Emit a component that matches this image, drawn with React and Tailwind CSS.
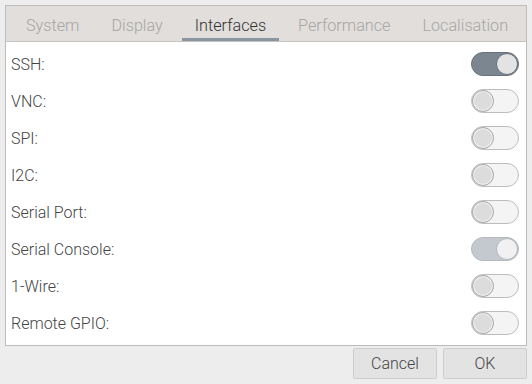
const TABS = ['System', 'Display', 'Interfaces', 'Performance', 'Localisation'];

const ROWS = [
  { label: 'SSH:', on: true },
  { label: 'VNC:', on: false },
  { label: 'SPI:', on: false },
  { label: 'I2C:', on: false },
  { label: 'Serial Port:', on: false },
  { label: 'Serial Console:', on: true, disabled: true },
  { label: '1-Wire:', on: false },
  { label: 'Remote GPIO:', on: false },
];

function Switch({ on, disabled }) {
  if (on) {
    const track = disabled ? 'bg-[#c3c9cf] border-[#b4bac0]' : 'bg-[#7b8690] border-[#6a737b]';
    const knob = disabled ? 'bg-[#f1f1f1] border-[#b4bac0]' : 'bg-[#e3e3e3] border-[#6a737b]';
    return (
      <div className={`w-[48px] h-[24px] rounded-full border flex items-center justify-end ${track}`}>
        <div className={`w-[22px] h-[22px] rounded-full border ${knob}`} />
      </div>
    );
  }
  return (
    <div className="w-[48px] h-[24px] rounded-full border border-[#bdbdbd] bg-[#f4f4f4] flex items-center justify-start">
      <div className="w-[22px] h-[22px] rounded-full border border-[#a9a9a9] bg-[#dcdcdc] shadow-[inset_0_0_0_1px_#f4f4f4]" />
    </div>
  );
}

export default function App() {
  return (
    <div
      className="w-[532px] h-[384px] bg-[#ededed] pt-[5px] px-[5px] flex flex-col text-[16px] font-light"
      style={{ fontFamily: 'Roboto, "Liberation Sans", sans-serif' }}
    >
      {/* Notebook */}
      <div className="w-[522px] h-[341px] border border-[#bcbcbc] flex flex-col">
        <div className="h-[36px] bg-[#e1dedb] flex pl-[7px] gap-[6px] border-b border-[#c7c4c1]">
          {TABS.map((t) => (
            <div
              key={t}
              className={`px-[13px] flex items-center border-b-[3px] text-[16.2px] ${
                t === 'Interfaces'
                  ? 'border-[#8b959e] text-[#333333]'
                  : 'border-transparent text-[#a6a6a6]'
              }`}
            >
              <span className="pt-[8px]">{t}</span>
            </div>
          ))}
        </div>
        <div className="flex-1 bg-white flex flex-col justify-between pt-[10px] pb-[10px] pl-[5px] pr-[7px]">
          {ROWS.map((r) => (
            <div key={r.label} className="h-[24px] flex items-center justify-between">
              <span className="text-[#444444] pt-[1px]">{r.label}</span>
              <Switch on={r.on} disabled={r.disabled} />
            </div>
          ))}
        </div>
      </div>

      {/* Buttons */}
      <div className="flex justify-end gap-[6px] mt-[2px]">
        {['Cancel', 'OK'].map((b) => (
          <button
            key={b}
            className="w-[84px] h-[31px] bg-[#e3e3e3] border border-[#cdcdcd] rounded-[2px] text-[#444444] text-[16px]"
          >
            {b}
          </button>
        ))}
      </div>
    </div>
  );
}
